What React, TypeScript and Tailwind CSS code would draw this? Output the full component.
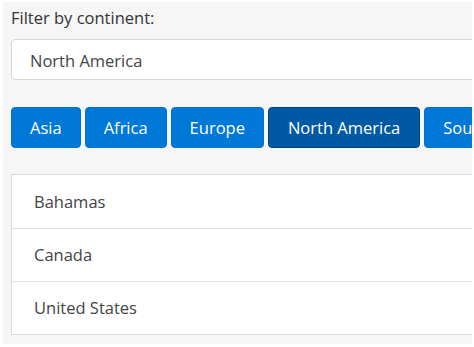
const continents = ["Asia", "Africa", "Europe", "North America", "South America"];
const countries = ["Bahamas", "Canada", "United States"];

export default function App() {
  const selected = "North America";

  return (
    <div className="h-[347px] w-[474px] overflow-hidden bg-white pl-[3px] pt-[2px]">
      <div
        className="h-[342px] w-[469px] overflow-hidden bg-[#f6f6f6] pl-[8px] pt-[4px] text-[#333]"
        style={{ fontFamily: '"Open Sans", "Noto Sans", sans-serif' }}
      >
        <label className="block text-[16.5px] leading-[24px] text-[#333]">Filter by continent:</label>
        <div className="mt-[9px] flex h-[41px] w-[480px] items-center rounded-[4px] border border-[#d6d6d6] bg-white pl-[18px] pt-[4px] text-[16.5px] text-[#444]">
          {selected}
        </div>
        <div className="mt-[27px] flex w-[600px] gap-[4px]">
          {continents.map((c) => (
            <button
              key={c}
              className={
                c === selected
                  ? "h-[41px] shrink-0 rounded-[4px] border border-[#00457e] bg-[#0059a3] px-[19px] pt-[1px] text-[16.5px] text-white"
                  : "h-[41px] shrink-0 rounded-[4px] border border-[#0072d0] bg-[#0078d7] px-[18px] pt-[1px] text-[16.5px] text-white"
              }
            >
              {c}
            </button>
          ))}
        </div>
        <ul className="mt-[26px] w-[480px] border border-[#dcdcdc] bg-white">
          {countries.map((c, i) => (
            <li
              key={c}
              className={
                i === 0
                  ? "flex h-[53px] items-center pl-[22px] pt-[1px] text-[16.5px] text-[#444]"
                  : "flex h-[53px] items-center border-t border-[#e2e2e2] pl-[22px] pt-[1px] text-[16.5px] text-[#444]"
              }
            >
              {c}
            </li>
          ))}
        </ul>
      </div>
    </div>
  );
}
